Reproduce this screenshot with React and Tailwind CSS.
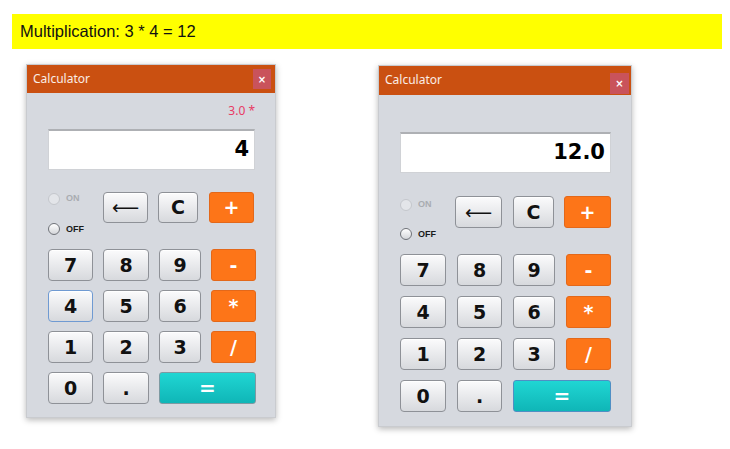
import React from 'react';

const sizes = {
  left: {
    win: 'w-[250px] h-[354px]',
    title: 'h-[28px]',
    close: 'mt-[4px] mr-[4px] w-[18px] h-[20px]',
    labelGap: 'mt-[10px]',
    displayGap: 'mt-[11px]',
    controlsGap: 'mt-[22px] h-[57px]',
    onTop: 'mt-0',
    offGap: 'mt-[17px]',
    topBtn: 'h-[31px]',
    back: 'w-[45px]',
    clear: 'ml-[10px] w-[40px]',
    plus: 'ml-[11px] w-[45px]',
    grid: 'grid-cols-[45px_46px_42px_45px] gap-x-[10px] gap-y-[9px]',
  },
  right: {
    win: 'w-[254px] h-[362px]',
    title: 'h-[29px]',
    close: 'mt-[7px] mr-[2px] w-[19px] h-[21px]',
    labelGap: 'mt-[10px]',
    displayGap: 'mt-[12px]',
    controlsGap: 'mt-[23px] h-[58px]',
    onTop: 'mt-[2px]',
    offGap: 'mt-[16px]',
    topBtn: 'h-[32px]',
    back: 'w-[47px]',
    clear: 'ml-[11px] w-[41px]',
    plus: 'ml-[10px] w-[47px]',
    grid: 'grid-cols-[46px_45px_42px_45px] gap-x-[11px] gap-y-[10px]',
  },
};

const greyBtn =
  'flex items-center justify-center rounded-[4px] border bg-gradient-to-b from-[#fbfbfc] to-[#d7d9dd] shadow-[inset_0_1px_0_#ffffff] font-bold text-[19px] text-[#111] font-["DejaVu_Sans",sans-serif]';
const orangeBtn =
  'flex items-center justify-center rounded-[3px] border border-[#e3681a] bg-[#fd7518] font-bold text-[19px] text-white font-["DejaVu_Sans",sans-serif]';

function Radio({ label, disabled, className }) {
  return (
    <div className={`flex items-center gap-[6px] ${className}`}>
      <span
        className={
          disabled
            ? 'w-[12px] h-[12px] rounded-full border border-[#c4c7cc] bg-[#e3e5e9]'
            : 'w-[12px] h-[12px] rounded-full border border-[#6f7278] bg-gradient-to-b from-white to-[#d4d6da]'
        }
      />
      <span
        className={`text-[9px] font-bold font-["Liberation_Sans",sans-serif] ${
          disabled ? 'text-[#a9acb1]' : 'text-[#1a1a1a]'
        }`}
      >
        {label}
      </span>
    </div>
  );
}

function Calculator({ s, memo, value, focusKey, eqFocus }) {
  const keys = ['7', '8', '9', '-', '4', '5', '6', '*', '1', '2', '3', '/', '0', '.'];
  return (
    <div className={`${s.win} flex flex-col bg-[#d6d9df] border border-[#c9cbcf] shadow-[0_2px_6px_rgba(0,0,0,0.28)]`}>
      <div className={`${s.title} flex items-start justify-between bg-[#ca5011] shrink-0`}>
        <span className='pl-[6px] pt-[5px] text-[12px] text-white/90 font-["Noto_Sans",sans-serif]'>Calculator</span>
        <span className={`${s.close} flex items-center justify-center bg-[#c9535b] text-white text-[10px] font-bold font-["DejaVu_Sans",sans-serif]`}>
          ×
        </span>
      </div>
      <div className="flex flex-col pl-[21px] pr-[20px]">
        <div className={`${s.labelGap} h-[15px] text-right text-[12px] leading-[15px] text-[#e83a64] font-["Noto_Sans",sans-serif]`}>
          {memo}
        </div>
        <div
          className={`${s.displayGap} h-[41px] flex items-center justify-end pr-[5px] bg-white border border-[#d0d2d6] border-t-2 border-t-[#aeb0b4] text-[21px] font-bold text-black font-["DejaVu_Sans",sans-serif]`}
        >
          {value}
        </div>
        <div className={`${s.controlsGap} flex`}>
          <div className="w-[55px] flex flex-col">
            <Radio label="ON" disabled className={s.onTop} />
            <Radio label="OFF" className={s.offGap} />
          </div>
          <div className={`${greyBtn} ${s.topBtn} ${s.back} border-[#8e9197] font-normal text-[15px]`}>⟵</div>
          <div className={`${greyBtn} ${s.topBtn} ${s.clear} border-[#8e9197]`}>C</div>
          <div className={`${orangeBtn} ${s.topBtn} ${s.plus}`}>+</div>
        </div>
        <div className={`grid ${s.grid} auto-rows-[32px]`}>
          {keys.map((k) =>
            ['-', '*', '/'].includes(k) ? (
              <div key={k} className={orangeBtn}>
                {k}
              </div>
            ) : (
              <div
                key={k}
                className={`${greyBtn} ${k === focusKey ? 'border-[#6f9ad2]' : 'border-[#8e9197]'}`}
              >
                {k}
              </div>
            )
          )}
          <div
            className={`col-span-2 flex items-center justify-center rounded-[3px] border bg-gradient-to-b from-[#1fd6d3] to-[#0fb6b7] text-white font-bold text-[20px] font-["DejaVu_Sans",sans-serif] ${
              eqFocus ? 'border-[#4f8fc4]' : 'border-[#7d9aa2]'
            }`}
          >
            =
          </div>
        </div>
      </div>
    </div>
  );
}

export default function App() {
  return (
    <div className="w-[730px] h-[449px] bg-white overflow-hidden">
      <div className='ml-[12px] mt-[14px] w-[710px] h-[35px] flex items-center pl-[8px] bg-[#ffff00] text-[16.5px] text-[#111] font-["Liberation_Sans",sans-serif]'>
        Multiplication: 3 * 4 = 12
      </div>
      <div className="flex items-start pl-[26px] mt-[15px]">
        <Calculator s={sizes.left} memo="3.0 *" value="4" focusKey="4" />
        <div className="ml-[102px] mt-px">
          <Calculator s={sizes.right} memo="" value="12.0" eqFocus />
        </div>
      </div>
    </div>
  );
}
